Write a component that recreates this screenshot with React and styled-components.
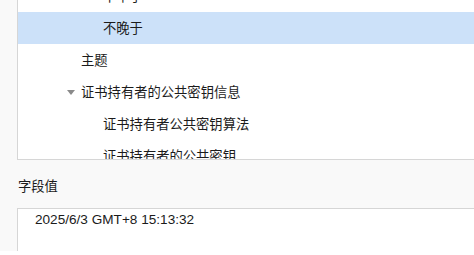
import styled, { createGlobalStyle } from "styled-components";

const GlobalStyle = createGlobalStyle`
  html, body {
    margin: 0;
    padding: 0;
    background: #ffffff;
  }
  body {
    font-family: "Noto Sans", "Noto Sans CJK SC", sans-serif;
    color: #1b1b1b;
  }
`;

const rows = [
  { label: "不早于", level: 2 },
  { label: "不晚于", level: 2, selected: true },
  { label: "主题", level: 1 },
  { label: "证书持有者的公共密钥信息", level: 1, expanded: true },
  { label: "证书持有者公共密钥算法", level: 2 },
  { label: "证书持有者的公共密钥", level: 2 },
];

export default function App() {
  return (
    <>
      <GlobalStyle />
      <Page>
        <TreePanel>
          <TreeList>
            {rows.map((row) => (
              <TreeRow key={row.label} selected={row.selected}>
                <Indent level={row.level}>
                  {row.expanded && <Caret />}
                </Indent>
                <RowText>{row.label}</RowText>
              </TreeRow>
            ))}
          </TreeList>
        </TreePanel>
        <FieldLabel>字段值</FieldLabel>
        <ValueBox>2025/6/3 GMT+8 15:13:32</ValueBox>
      </Page>
    </>
  );
}

const Page = styled.div`
  height: 251px;
  background: #f9f9f9;
  padding-left: 17px;
  display: flex;
  flex-direction: column;
  overflow: hidden;
`;

const TreePanel = styled.div`
  height: 160px;
  box-sizing: border-box;
  background: #ffffff;
  border-left: 1px solid #d6d6d6;
  border-bottom: 1px solid #d6d6d6;
  overflow: hidden;
  flex-shrink: 0;
`;

const TreeList = styled.ul`
  list-style: none;
  margin: -20px 0 0 0;
  padding: 0;
`;

const TreeRow = styled.li`
  height: 32px;
  display: flex;
  align-items: center;
  background: ${({ selected }) => (selected ? "#cce1f9" : "transparent")};
`;

const Indent = styled.div`
  width: ${({ level }) => (level === 1 ? 63 : 85)}px;
  flex-shrink: 0;
  display: flex;
  align-items: center;
  justify-content: flex-end;
  padding-right: 6px;
  box-sizing: border-box;
`;

const Caret = styled.span`
  width: 0;
  height: 0;
  border-left: 4.5px solid transparent;
  border-right: 4.5px solid transparent;
  border-top: 5px solid #8a8a8a;
  margin-top: 1px;
`;

const RowText = styled.span`
  font-size: 13.3px;
  line-height: 20px;
  white-space: nowrap;
`;

const FieldLabel = styled.div`
  font-size: 13.3px;
  line-height: 20px;
  padding: 16px 0 12px 1px;
  flex-shrink: 0;
`;

const ValueBox = styled.div`
  flex: 1;
  background: #ffffff;
  border-top: 1px solid #d6d6d6;
  border-left: 1px solid #d6d6d6;
  padding: 1px 0 0 17px;
  font-family: "Liberation Sans", "Noto Sans CJK SC", sans-serif;
  font-size: 13.6px;
  line-height: 20px;
`;
